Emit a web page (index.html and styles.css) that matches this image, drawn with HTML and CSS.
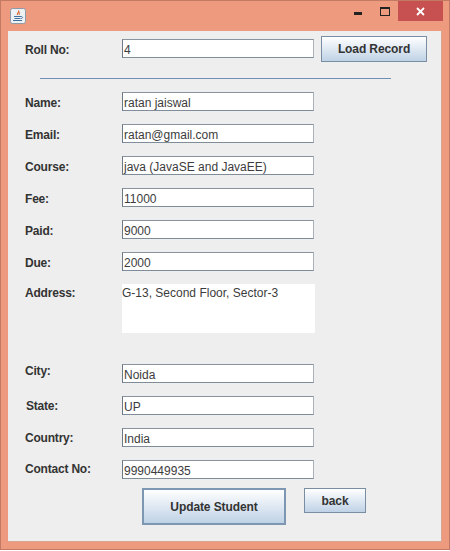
FILE: index.html
```html
<!DOCTYPE html>
<html lang="en">
<head>
    <meta charset="UTF-8">
    <meta name="viewport" content="width=device-width, initial-scale=1.0">
    <title>Update Student</title>
    <link rel="stylesheet" href="styles.css">
</head>
<body>
    <div class="window">
        <div class="titlebar">
            <svg class="app-icon" width="16" height="16" viewBox="0 0 16 16">
                <rect x="0.5" y="0.5" width="15" height="15" rx="2" fill="#eef1f4" stroke="#8d99a6"/>
                <path d="M8.5 2.5C10 4 6.5 5 7.5 7" fill="none" stroke="#d9642a" stroke-width="1.2"/>
                <path d="M10 4C9 5 9 6 9.5 7" fill="none" stroke="#d9642a"/>
                <path d="M4 8.5H11M4.5 10.5H10.5M3 12.5H12" stroke="#3f6f9c" stroke-width="1.1"/>
                <path d="M11 8.5C13 8.5 13 10.5 11 10.5" fill="none" stroke="#3f6f9c"/>
            </svg>
            <div class="controls">
                <span class="ctl min-ctl"><span class="min-icon"></span></span>
                <span class="ctl"><span class="max-icon"></span></span>
                <span class="ctl close">
                    <svg width="9" height="9" viewBox="0 0 9 9"><path d="M1 1L8 8M8 1L1 8" stroke="#fff" stroke-width="1.8"/></svg>
                </span>
            </div>
        </div>
        <div class="content">
            <div class="row roll-row">
                <label class="lbl">Roll No:</label>
                <div class="field">4</div>
                <button class="btn load-btn">Load Record</button>
            </div>
            <div class="divider"></div>

            <div class="row first">
                <label class="lbl">Name:</label>
                <div class="field">ratan jaiswal</div>
            </div>
            <div class="row">
                <label class="lbl">Email:</label>
                <div class="field">ratan@gmail.com</div>
            </div>
            <div class="row">
                <label class="lbl">Course:</label>
                <div class="field">java (JavaSE and JavaEE)</div>
            </div>
            <div class="row">
                <label class="lbl">Fee:</label>
                <div class="field">11000</div>
            </div>
            <div class="row">
                <label class="lbl">Paid:</label>
                <div class="field">9000</div>
            </div>
            <div class="row">
                <label class="lbl">Due:</label>
                <div class="field">2000</div>
            </div>
            <div class="row address-row">
                <label class="lbl lbl-flat">Address:</label>
                <div class="area">G-13, Second Floor, Sector-3</div>
            </div>
            <div class="row city-row">
                <label class="lbl lbl-flat lbl-up">City:</label>
                <div class="field">Noida</div>
            </div>
            <div class="row">
                <label class="lbl lbl-low lbl-state">State:</label>
                <div class="field">UP</div>
            </div>
            <div class="row">
                <label class="lbl lbl-low">Country:</label>
                <div class="field">India</div>
            </div>
            <div class="row">
                <label class="lbl lbl-flat">Contact No:</label>
                <div class="field">9990449935</div>
            </div>
            <div class="actions">
                <button class="btn update-btn">Update Student</button>
                <button class="btn back-btn">back</button>
            </div>
        </div>
    </div>
</body>
</html>
```

FILE: styles.css
```css
html, body {
    margin: 0;
    padding: 0;
}
body {
    width: 450px;
    height: 551px;
    overflow: hidden;
    font-family: "Liberation Sans", Arial, sans-serif;
    font-size: 12px;
    color: #333;
}
.window {
    box-sizing: border-box;
    width: 450px;
    height: 550px;
    background-color: #ee9a7f;
    border: 1px solid #c27a64;
    padding: 0 7px 7px 7px;
    display: flex;
    flex-direction: column;
}
.titlebar {
    height: 30px;
    display: flex;
    justify-content: space-between;
    flex-shrink: 0;
}
.app-icon {
    margin: 7px 0 0 2px;
}
.controls {
    display: flex;
    align-items: flex-start;
    margin-right: -1px;
}
.ctl {
    width: 16px;
    height: 20px;
    display: flex;
    align-items: center;
    justify-content: center;
}
.min-ctl {
    margin-right: 11px;
}
.close {
    width: 45px;
    margin-left: 5px;
    background-color: #c75050;
}
.min-icon {
    width: 8px;
    height: 3px;
    margin-top: 4px;
    background-color: #222;
}
.max-icon {
    box-sizing: border-box;
    width: 10px;
    height: 9px;
    border: 1px solid #222;
    border-top-width: 2px;
}
.content {
    flex: 1;
    background-color: #eeeeee;
    padding: 8px 0 0 17px;
    border: 1px solid #d9a593;
    border-width: 0 1px 1px 0;
}
.row {
    display: flex;
    height: 19px;
    margin-top: 13px;
}
.lbl {
    box-sizing: border-box;
    width: 97px;
    flex-shrink: 0;
    padding-top: 2px;
    letter-spacing: -0.2px;
    font-weight: bold;
    line-height: 19px;
}
.lbl-flat {
    padding-top: 0;
}
.lbl-low {
    padding-top: 1px;
}
.lbl-up {
    margin-top: -2px;
}
.lbl-state {
    padding-left: 1px;
}
.field {
    box-sizing: border-box;
    width: 192px;
    height: 19px;
    padding: 1px 0 0 1px;
    line-height: 18px;
    background-color: #fff;
    border: 1px solid #7f8c99;
    border-top-color: #8a949e;
    border-left-color: #6d7984;
    border-right-color: #a9b2ba;
    color: #3c3c3c;
}
.area {
    width: 193px;
    height: 49px;
    line-height: 18px;
    background-color: #fff;
    color: #3c3c3c;
}
.btn {
    box-sizing: border-box;
    padding: 0;
    font-family: inherit;
    font-size: 12px;
    letter-spacing: -0.1px;
    font-weight: bold;
    color: #333;
    background: linear-gradient(to bottom, #ffffff, #e8eff6 35%, #bfd2e6);
    border: 1px solid #7a8ea3;
}
.roll-row {
    margin-top: 0;
}
.load-btn {
    width: 106px;
    height: 26px;
    margin: -3px 0 0 7px;
    flex-shrink: 0;
}
.divider {
    width: 351px;
    height: 1px;
    margin: 20px 0 0 15px;
    background-color: #6f8fb5;
}
.address-row {
    height: 49px;
}
.city-row {
    margin-top: 31px;
}
.actions {
    display: flex;
    align-items: flex-start;
    margin: 9px 0 0 117px;
}
.update-btn {
    width: 144px;
    height: 37px;
    border-width: 2px;
    border-color: #7d97b3;
}
.back-btn {
    width: 62px;
    height: 25px;
    margin-left: 18px;
}
```
